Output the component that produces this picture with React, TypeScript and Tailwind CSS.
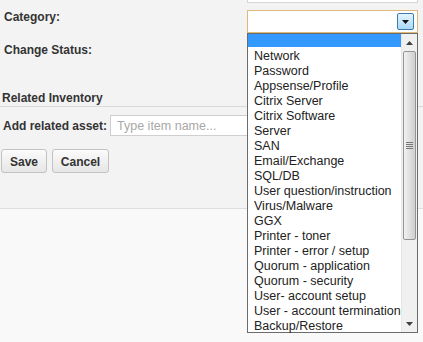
const categories = [
  '',
  'Network',
  'Password',
  'Appsense/Profile',
  'Citrix Server',
  'Citrix Software',
  'Server',
  'SAN',
  'Email/Exchange',
  'SQL/DB',
  'User question/instruction',
  'Virus/Malware',
  'GGX',
  'Printer - toner',
  'Printer - error / setup',
  'Quorum - application',
  'Quorum - security',
  'User- account setup',
  'User - account termination',
  'Backup/Restore',
];

const Triangle = ({ up = false, color = '#111' }: { up?: boolean; color?: string }) => (
  <svg width="7" height="4" viewBox="0 0 7 4">
    <path d={up ? 'M0 4 L3.5 0 L7 4 Z' : 'M0 0 L7 0 L3.5 4 Z'} fill={color} />
  </svg>
);

const App = () => {
  return (
    <div className="relative w-[423px] h-[342px] overflow-hidden bg-[#f3f3f3] font-['Liberation_Sans',Arial,sans-serif] text-[#333]">
      <div className="ml-[247px] w-[171px] h-[3px] bg-white border border-t-0 border-[#d6d6d6]" />

      {/* Category */}
      <div className="mt-[7px] flex items-start h-[23px]">
        <div className="w-[247px] pl-[4px] text-[12px] leading-[14px] font-bold">Category:</div>
        <div className="relative w-[171px] h-[23px] bg-white border border-[#dfb97a] flex items-center justify-end pr-[3px]">
          <div className="w-[17px] h-[17px] border border-[#3d7bad] rounded-[2px] bg-gradient-to-b from-[#e5f4fc] to-[#a9d9f5] flex items-center justify-center">
            <Triangle />
          </div>
        </div>
      </div>

      {/* Change Status */}
      <div className="mt-[5px] flex items-center h-[23px]">
        <div className="w-[247px] pl-[4px] text-[12px] font-bold">Change Status:</div>
      </div>

      {/* Related Inventory */}
      <div className="mt-[28px] h-[18px] leading-[19px] pl-[2px] text-[12px] font-bold border-b border-[#d9d9d9]">
        Related Inventory
      </div>

      <div className="mt-[8px] flex items-center h-[21px] pl-[3px] gap-[3px]">
        <div className="text-[12px] font-bold">Add related asset:</div>
        <input
          type="text"
          placeholder="Type item name..."
          className="w-[170px] h-[21px] bg-white border border-[#cfcfcf] px-[6px] text-[12.5px] placeholder:text-[#a8a8a8] outline-none"
        />
      </div>

      <div className="mt-[13px] flex gap-[5px] pl-[1px]">
        <button className="w-[46px] h-[24px] pt-[1px] rounded-[3px] border border-[#c2c2c2] bg-gradient-to-b from-[#fbfbfb] to-[#e6e6e6] text-[12px] font-bold text-[#333]">
          Save
        </button>
        <button className="w-[57px] h-[24px] pt-[1px] rounded-[3px] border border-[#c2c2c2] bg-gradient-to-b from-[#fbfbfb] to-[#e6e6e6] text-[12px] font-bold text-[#333]">
          Cancel
        </button>
      </div>

      <div className="mt-[35px] h-full bg-[#f9f9f9] border-t border-[#dedede]" />

      {/* Open dropdown list */}
      <div className="absolute left-[247px] top-[33px] w-[171px] h-[300px] bg-white border border-[#6b6b6b] flex">
        <div className="flex-1 flex flex-col">
          {categories.map((c, i) => (
            <div
              key={i}
              className={
                i === 0
                  ? 'h-[15px] bg-[#3399ff]'
                  : 'h-[15px] pt-[2px] leading-[15px] pl-[6px] text-[12.5px] text-[#222] whitespace-nowrap'
              }
            >
              {c}
            </div>
          ))}
        </div>
        <div className="w-[17px] h-full bg-[#f0f0f0] border-l border-[#e6e6e6] flex flex-col">
          <div className="h-[17px] flex items-center justify-center">
            <Triangle up color="#404040" />
          </div>
          <div className="mx-[1px] h-[189px] rounded-[2px] border border-[#959595] bg-gradient-to-r from-[#f2f2f2] via-[#e0e0e0] to-[#cfcfcf] flex flex-col items-center justify-center gap-[1px]">
            <div className="w-[7px] h-[1px] bg-[#777]" />
            <div className="w-[7px] h-[1px] bg-[#777]" />
            <div className="w-[7px] h-[1px] bg-[#777]" />
            <div className="w-[7px] h-[1px] bg-[#777]" />
          </div>
          <div className="flex-1" />
          <div className="h-[17px] flex items-center justify-center">
            <Triangle color="#404040" />
          </div>
        </div>
      </div>
    </div>
  );
};

export default App;
